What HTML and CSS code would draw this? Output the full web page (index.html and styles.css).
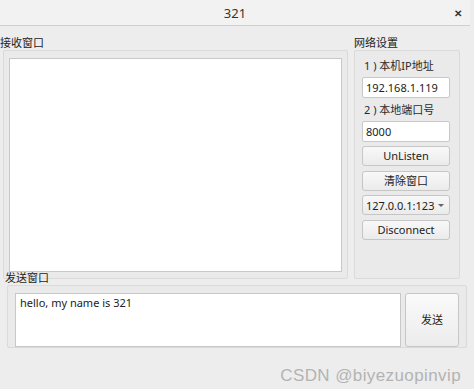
FILE: index.html
```html
<!DOCTYPE html>
<html lang="zh-CN">
<head>
    <meta charset="UTF-8">
    <meta name="viewport" content="width=device-width, initial-scale=1.0">
    <title>321</title>
    <link rel="stylesheet" href="styles.css">
</head>
<body>
    <div class="window">
        <!-- Title bar -->
        <div class="titlebar">
            <span class="title">321</span>
            <span class="close">&#x2715;</span>
        </div>

        <div class="top-row">
            <!-- Receive area -->
            <div class="recv-col">
                <div class="group-label recv-label">接收窗口</div>
                <div class="group recv-group">
                    <div class="textbox recv-box"></div>
                </div>
            </div>

            <!-- Network settings -->
            <div class="net-col">
                <div class="group-label">网络设置</div>
                <div class="group net-group">
                    <div class="field-label">1 ) 本机IP地址</div>
                    <div class="line-edit">192.168.1.119</div>
                    <div class="field-label">2 ) 本地端口号</div>
                    <div class="line-edit">8000</div>
                    <div class="btn">UnListen</div>
                    <div class="btn">清除窗口</div>
                    <div class="combo">
                        <span>127.0.0.1:123</span>
                        <span class="arrow"></span>
                    </div>
                    <div class="btn">Disconnect</div>
                </div>
            </div>
        </div>

        <!-- Send area -->
        <div class="group-label send-label">发送窗口</div>
        <div class="group send-group">
            <div class="textbox send-box">hello, my name is 321</div>
            <div class="btn send-btn">发送</div>
        </div>

        <div class="watermark">CSDN @biyezuopinvip</div>
    </div>
</body>
</html>
```

FILE: styles.css
```css
/* Qt style window */
body {
    margin: 0;
    padding: 0;
    background-color: #ededed;
    font-family: "Noto Sans", "Noto Sans CJK SC", sans-serif;
    font-size: 11px;
    color: #2e2e2e;
}

.window {
    width: 470px;
    height: 389px;
    background-color: #ededed;
    position: relative;
}

.titlebar {
    height: 25px;
    background-color: #f2f2f2;
    border-bottom: 1px solid #cfcfcf;
    display: flex;
    align-items: center;
    justify-content: center;
    position: relative;
}

.title {
    font-size: 13px;
    color: #333;
}

.close {
    position: absolute;
    right: 8px;
    top: 6px;
    font-size: 10px;
    font-weight: bold;
    color: #333;
}

.top-row {
    display: flex;
    margin-top: 9px;
}

.group-label {
    height: 15px;
    line-height: 15px;
    font-size: 11px;
    color: #222;
}

.group {
    border: 1px solid #dadada;
    border-radius: 2px;
    background-color: #eaeaea;
    box-sizing: border-box;
}

.recv-col {
    width: 350px;
}

.recv-group {
    margin-left: 3px;
    width: 345px;
    height: 229px;
    padding: 7px 0 0 5px;
}

.textbox {
    background-color: #fff;
    border: 1px solid #c8c8c8;
    box-sizing: border-box;
}

.recv-box {
    width: 333px;
    height: 214px;
}

.net-col {
    margin-left: 4px;
}

.net-group {
    width: 106px;
    height: 229px;
    padding: 7px 0 0 7px;
    display: flex;
    flex-direction: column;
}

.field-label {
    height: 15px;
    line-height: 15px;
    margin-left: 2px;
    margin-bottom: 4px;
    font-size: 11px;
    color: #2a2a2a;
}

.line-edit {
    width: 88px;
    height: 21px;
    line-height: 19px;
    padding-left: 3px;
    box-sizing: border-box;
    background-color: #fff;
    border: 1px solid #c8c8c8;
    border-radius: 2px;
    margin-bottom: 4px;
    font-size: 11px;
    color: #222;
}

.btn {
    width: 88px;
    height: 20px;
    line-height: 18px;
    box-sizing: border-box;
    text-align: center;
    background: linear-gradient(#f8f8f8, #ebebeb);
    border: 1px solid #c6c6c6;
    border-radius: 3px;
    margin-bottom: 5px;
    font-size: 11px;
    color: #222;
}

.combo {
    width: 88px;
    height: 20px;
    box-sizing: border-box;
    background: linear-gradient(#f8f8f8, #ebebeb);
    border: 1px solid #c6c6c6;
    border-radius: 3px;
    margin-top: -1px;
    margin-bottom: 5px;
    padding: 0 5px 0 3px;
    display: flex;
    align-items: center;
    justify-content: space-between;
    font-size: 11px;
    color: #222;
}

.arrow {
    width: 0;
    height: 0;
    border-left: 3px solid transparent;
    border-right: 3px solid transparent;
    border-top: 3px solid #666;
}

.send-label {
    margin-top: -9px;
    margin-left: 5px;
    position: relative;
}

.send-group {
    margin-left: 7px;
    width: 460px;
    height: 63px;
    padding: 7px 0 0 7px;
    display: flex;
}

.send-box {
    width: 386px;
    height: 54px;
    padding: 1px 4px;
    font-size: 11px;
    color: #222;
}

.send-btn {
    width: 54px;
    height: 54px;
    line-height: 52px;
    margin-left: 4px;
    margin-bottom: 0;
    background: linear-gradient(#fafafa, #ececec);
}

.watermark {
    text-align: right;
    margin-top: 18px;
    margin-right: 9px;
    font-family: "Liberation Sans", Arial, sans-serif;
    font-size: 17px;
    letter-spacing: 0.4px;
    color: #b3b3b3;
}
```
